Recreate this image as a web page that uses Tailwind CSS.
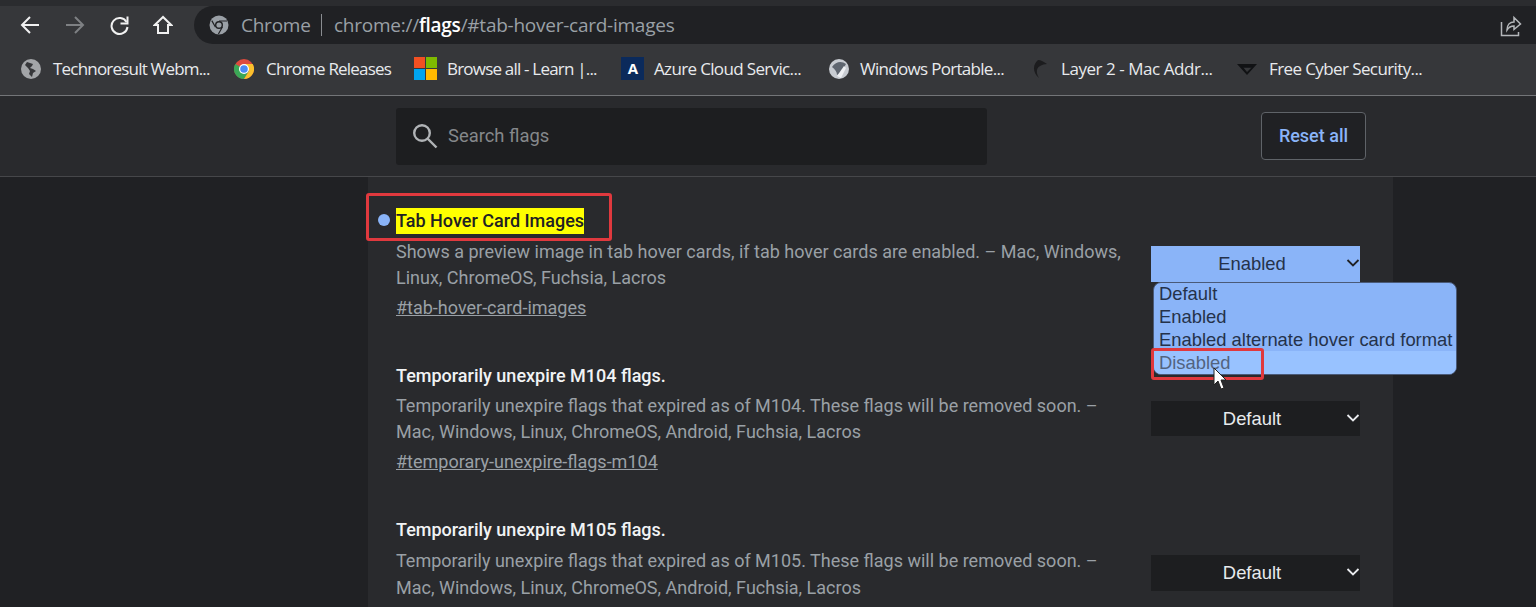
<!DOCTYPE html>
<html lang="en">
<head>
    <meta charset="UTF-8">
    <meta name="viewport" content="width=device-width, initial-scale=1.0">
    <title>Chrome flags</title>
    <script src="https://cdn.jsdelivr.net/npm/@tailwindcss/browser@4"></script>
</head>
<body class="h-[607px] overflow-hidden bg-[#202124] font-['Roboto',sans-serif]">

    <!-- Toolbar -->
    <div class="h-[44px] bg-[#36373a] border-t-[6px] border-[#2b2c2f] box-border flex items-center">
        <div class="flex items-center w-[194px] h-[38px] shrink-0">
            <svg class="ml-[20px]" width="20" height="20" viewBox="0 0 20 20" fill="none" stroke="#f1f1f1" stroke-width="2"><path d="M19 10H2M10 2l-8 8 8 8"/></svg>
            <svg class="ml-[25px]" width="20" height="20" viewBox="0 0 20 20" fill="none" stroke="#7e8083" stroke-width="2"><path d="M1 10h17M10 2l8 8-8 8"/></svg>
            <svg class="ml-[24px]" width="21" height="21" viewBox="0 0 21 21" fill="none" stroke="#f1f1f1" stroke-width="2"><path d="M17.5 7A8 8 0 1 0 18.5 12"/><path d="M18.5 1.5v7h-7" /></svg>
            <svg class="ml-[23px]" width="20" height="20" viewBox="0 0 20 20" fill="none" stroke="#f1f1f1" stroke-width="2"><path d="M10 2 1.8 10H5v8h10v-8h3.2z"/></svg>
        </div>
        <div class="flex-1 h-[38px] bg-[#202124] rounded-l-[20px] flex items-center text-[19px] text-[#9aa0a6] font-['Open_Sans',sans-serif] tracking-[-0.25px]">
            <svg class="ml-[15px]" width="20" height="20" viewBox="0 0 20 20"><circle cx="10" cy="10" r="9.5" fill="#9aa0a6"/><circle cx="10" cy="10" r="4" fill="#202124"/><circle cx="10" cy="10" r="2.6" fill="#9aa0a6"/><path d="M10 6h8M6.4 12 2.8 5.6M13.4 12l-4 7" stroke="#202124" stroke-width="1.2"/></svg>
            <span class="ml-[12px] w-[68px]">Chrome</span>
            <span class="ml-[12px] w-px h-[22px] bg-[#8a8d91]"></span>
            <span class="ml-[12px]">chrome://<span class="text-white font-semibold">flags</span>/#tab-hover-card-images</span>
            <svg class="ml-auto mr-[14px]" width="22" height="24" viewBox="0 0 22 24" fill="none" stroke="#b4b7ba" stroke-width="1.5"><path d="M1.5 9v13.5h17V19M7 17c0-5 3-8 7-8V4.5l6.5 6.500-6.500 5.500V13c-3 0-5.500 1.500-7 4z"/></svg>
        </div>
    </div>

    <!-- Bookmarks -->
    <div class="h-[51px] pb-[2px] bg-[#36373a] flex items-center text-[17px] text-[#e8eaed] font-['Open_Sans',sans-serif] tracking-[-0.8px] whitespace-nowrap">
        <div class="flex items-center ml-[21px]">
            <svg width="20" height="20" viewBox="0 0 20 20"><circle cx="10" cy="10" r="10" fill="#a3a5a8"/><path d="M6 3 4 6l3 3 2 3-1 3 3 3 1-4 3-2-3-2-3-1 2-2 1-2z" fill="#36373a"/></svg>
            <span class="ml-[12px] w-[158px]">Technoresult Webm...</span>
        </div>
        <div class="flex items-center ml-[23px]">
            <svg width="20" height="20" viewBox="0 0 20 20"><circle cx="10" cy="10" r="10" fill="#dd4b3e"/><path d="M10 10 1.300 5A10 10 0 0 0 10 20l5-8z" fill="#3aa757"/><path d="M10 5h8.700A10 10 0 0 1 10 20l5-8z" fill="#fbc02d"/><circle cx="10" cy="10" r="5" fill="#fff"/><circle cx="10" cy="10" r="3.800" fill="#4a8af4"/></svg>
            <span class="ml-[12px] w-[125px]">Chrome Releases</span>
        </div>
        <div class="flex items-center ml-[23px]">
            <div class="grid grid-cols-2 gap-px w-[23px] h-[23px]">
                <div class="bg-[#f25022]"></div><div class="bg-[#7fba00]"></div><div class="bg-[#00a4ef]"></div><div class="bg-[#ffb900]"></div>
            </div>
            <span class="ml-[10px] w-[153px]">Browse all - Learn |...</span>
        </div>
        <div class="flex items-center ml-[21px]">
            <div class="w-[23px] h-[23px] bg-[#0b2a5b] text-white text-[15px] font-bold flex items-center justify-center">A</div>
            <span class="ml-[10px] w-[152px] tracking-[-0.65px]">Azure Cloud Servic...</span>
        </div>
        <div class="flex items-center ml-[22px]">
            <svg width="22" height="24" viewBox="0 0 22 24"><circle cx="11" cy="12" r="10" fill="#c8ccd2"/><path d="M4 10c4-6 10-6 14-3l-5 9-4 2c0-3-2-6-5-8z" fill="#5f6670"/><path d="M9 19l7-10 2 2-5 10z" fill="#eef0f3"/></svg>
            <span class="ml-[10px] w-[147px] tracking-[-0.7px]">Windows Portable...</span>
        </div>
        <div class="flex items-center ml-[22px]">
            <svg width="20" height="22" viewBox="0 0 20 22" fill="none"><path d="M9 2C4 6 3 14 10 20 6 13 7 7 18 6 15 4 12 2 9 2z" fill="#1c1c1e"/></svg>
            <span class="ml-[12px] w-[152px] tracking-[-0.45px]">Layer 2 - Mac Addr...</span>
        </div>
        <div class="flex items-center ml-[23px]">
            <svg width="22" height="14" viewBox="0 0 22 14"><path d="M1 2h20L11 13zM7 5l4 5 5-5z" fill="#111214" fill-rule="evenodd"/><path d="M5 5h12" stroke="#111214" stroke-width="1.500"/></svg>
            <span class="ml-[11px] tracking-[-0.6px]">Free Cyber Security...</span>
        </div>
    </div>

    <!-- Flags header -->
    <div class="h-[82px] bg-[#292a2d] border-t border-b border-t-[#737578] border-b-[#46474a] box-border flex items-center">
        <div class="ml-[396px] w-[591px] h-[57px] bg-[#1d1e20] rounded-[3px] flex items-center">
            <svg class="ml-[16px]" width="26" height="26" viewBox="0 0 26 26" fill="none" stroke="#b0b3b6" stroke-width="2.400"><circle cx="10" cy="10" r="7.800"/><path d="m15.500 15.500 9 9"/></svg>
            <span class="ml-[10px] text-[18.4px] text-[#85888b]">Search flags</span>
        </div>
        <div class="ml-[274px] w-[105px] h-[48px] pb-[1px] rounded-[4px] border border-[#5f6368] bg-[#202124] flex items-center justify-center text-[18px] font-medium text-[#8ab4f8]">Reset all</div>
    </div>

    <!-- Experiments -->
    <div class="relative h-[430px] flex">
        <div class="w-[368px] bg-[#202124]"></div>
        <div class="w-[1025px] bg-[#292a2d] pl-[28px] text-[18px] leading-[26px]">

            <div class="h-[154px] flex pt-[31px] relative">
                <span class="absolute left-[-18px] top-[37px] w-[12px] h-[12px] rounded-full bg-[#8ab4f8]"></span>
                <div class="w-[755px]">
                    <h2 class="h-[29px]"><span class="inline-block bg-[#ffff00] text-[#202124] font-medium h-[26px]">Tab Hover Card Images</span></h2>
                    <p class="text-[#9aa0a6] mt-[2px]">Shows a preview image in tab hover cards, if tab hover cards are enabled. – Mac, Windows, Linux, ChromeOS, Fuchsia, Lacros</p>
                    <a class="block mt-[4px] text-[#9aa0a6] underline">#tab-hover-card-images</a>
                </div>
                <div class="w-[209px] h-[36px] mt-[38px] pr-[7px] bg-[#8ab4f8] text-[#25324a] font-['Liberation_Sans',sans-serif] text-[18.4px] flex items-center justify-center relative">
                    Enabled
                    <svg class="absolute right-0 top-[12px]" width="14" height="10" viewBox="0 0 14 10" fill="none" stroke="#202124" stroke-width="1.800"><path d="m1.500 2 5.500 5.500L12.500 2"/></svg>
                </div>
            </div>

            <div class="h-[154px] flex pt-[31px]">
                <div class="w-[755px]">
                    <h2 class="h-[29px] pt-[1px] text-[#f1f3f4] font-medium">Temporarily unexpire M104 flags.</h2>
                    <p class="text-[#9aa0a6] mt-[2px] w-[710px]">Temporarily unexpire flags that expired as of M104. These flags will be removed soon. – Mac, Windows, Linux, ChromeOS, Android, Fuchsia, Lacros</p>
                    <a class="block mt-[4px] text-[#9aa0a6] underline">#temporary-unexpire-flags-m104</a>
                </div>
                <div class="w-[209px] h-[35px] mt-[39px] pr-[7px] bg-[#1d1e20] text-[#e8eaed] font-['Liberation_Sans',sans-serif] text-[18.4px] flex items-center justify-center relative">
                    Default
                    <svg class="absolute right-0 top-[12px]" width="14" height="10" viewBox="0 0 14 10" fill="none" stroke="#e8eaed" stroke-width="1.800"><path d="m1.500 2 5.500 5.500L12.500 2"/></svg>
                </div>
            </div>

            <div class="h-[122px] flex pt-[31px]">
                <div class="w-[755px]">
                    <h2 class="h-[29px] pt-[1px] text-[#f1f3f4] font-medium">Temporarily unexpire M105 flags.</h2>
                    <p class="text-[#9aa0a6] mt-[2px] w-[710px] leading-[27px]">Temporarily unexpire flags that expired as of M105. These flags will be removed soon. – Mac, Windows, Linux, ChromeOS, Android, Fuchsia, Lacros</p>
                </div>
                <div class="w-[209px] h-[36px] mt-[39px] pr-[7px] bg-[#1d1e20] text-[#e8eaed] font-['Liberation_Sans',sans-serif] text-[18.4px] flex items-center justify-center relative">
                    Default
                    <svg class="absolute right-0 top-[12px]" width="14" height="10" viewBox="0 0 14 10" fill="none" stroke="#e8eaed" stroke-width="1.800"><path d="m1.500 2 5.500 5.500L12.500 2"/></svg>
                </div>
            </div>
        </div>
        <div class="flex-1 bg-[#202124]"></div>

        <!-- Open select popup -->
        <div class="absolute left-[1153px] top-[105px] w-[304px] h-[93px] rounded-[8px] border border-[#4a5a78] bg-[#8ab4f8] text-[#25324a] text-[18.4px] leading-[23px] font-['Liberation_Sans',sans-serif] overflow-hidden whitespace-nowrap">
            <div class="pl-[5px] mt-[-1px]">Default</div>
            <div class="pl-[5px]">Enabled</div>
            <div class="pl-[5px]">Enabled alternate hover card format</div>
            <div class="pl-[5px] h-[24px] bg-[#98c2ff] text-[#53647f]">Disabled</div>
        </div>

        <!-- Red annotation boxes -->
        <div class="absolute left-[366px] top-[16px] w-[246px] h-[48px] rounded-[3px] border-[3px] border-[#e0393e]"></div>
        <div class="absolute left-[1151px] top-[171px] w-[113px] h-[32px] rounded-[3px] border-[3px] border-[#e0393e]"></div>

        <!-- Cursor -->
        <svg class="absolute left-[1213px] top-[190px]" width="14" height="24" viewBox="0 0 14 24"><path d="M1 1v17l4-4 3 8 3-1-3-8h5z" fill="#fff" stroke="#222" stroke-width="1"/></svg>
    </div>

</body>
</html>
